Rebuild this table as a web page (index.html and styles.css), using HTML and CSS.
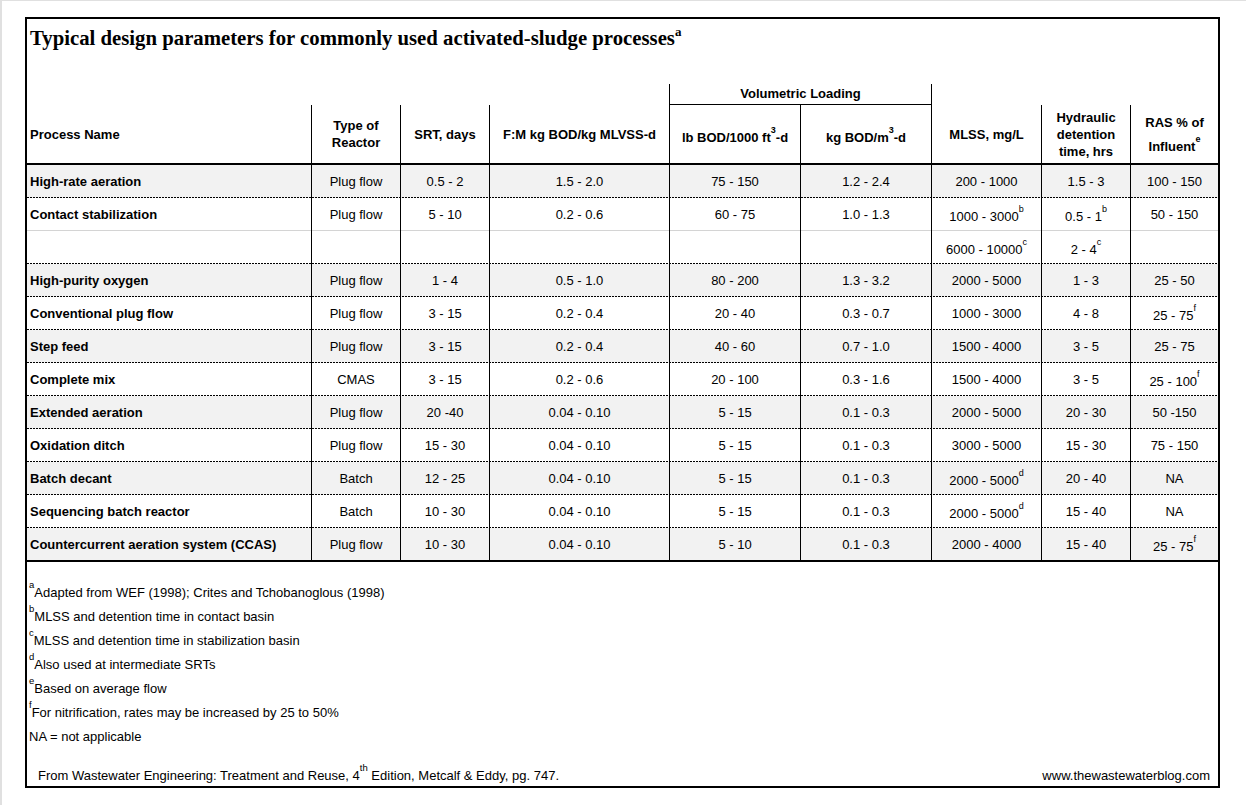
FILE: index.html
```html
<!DOCTYPE html>
<html lang="en">
<head>
<meta charset="utf-8">
<title>Typical design parameters for activated-sludge processes</title>
<link rel="stylesheet" href="styles.css">
</head>
<body>
<div class="page">
  <div class="sheet">
    <h1 class="title">Typical design parameters for commonly used activated-sludge processes<sup class="tsup">a</sup></h1>

    <div class="hrow1">
      <div class="hspacer"></div>
      <div class="hgroup">Volumetric Loading</div>
    </div>
    <div class="hrow2">
      <div class="hc left"><span>Process Name</span></div>
      <div class="hc"><span>Type of<br>Reactor</span></div>
      <div class="hc"><span>SRT, days</span></div>
      <div class="hc"><span>F:M kg BOD/kg MLVSS-d</span></div>
      <div class="hc"><span>lb BOD/1000 ft<sup class="s">3</sup>-d</span></div>
      <div class="hc"><span>kg BOD/m<sup class="s">3</sup>-d</span></div>
      <div class="hc"><span>MLSS, mg/L</span></div>
      <div class="hc"><span>Hydraulic<br>detention<br>time, hrs</span></div>
      <div class="hc"><span>RAS % of<br>Influent<sup class="s">e</sup></span></div>
    </div>

    <div class="row shade">
      <div class="c name"><span>High-rate aeration</span></div><div class="c"><span>Plug flow</span></div><div class="c"><span>0.5 - 2</span></div><div class="c"><span>1.5 - 2.0</span></div><div class="c"><span>75 - 150</span></div><div class="c"><span>1.2 - 2.4</span></div><div class="c"><span>200 - 1000</span></div><div class="c"><span>1.5 - 3</span></div><div class="c"><span>100 - 150</span></div>
    </div>
    <div class="row solid">
      <div class="c name"><span>Contact stabilization</span></div><div class="c"><span>Plug flow</span></div><div class="c"><span>5 - 10</span></div><div class="c"><span>0.2 - 0.6</span></div><div class="c"><span>60 - 75</span></div><div class="c"><span>1.0 - 1.3</span></div><div class="c"><span>1000 - 3000<sup class="s">b</sup></span></div><div class="c"><span>0.5 - 1<sup class="s">b</sup></span></div><div class="c"><span>50 - 150</span></div>
    </div>
    <div class="row">
      <div class="c name"></div><div class="c"></div><div class="c"></div><div class="c"></div><div class="c"></div><div class="c"></div><div class="c"><span>6000 - 10000<sup class="s">c</sup></span></div><div class="c"><span>2 - 4<sup class="s">c</sup></span></div><div class="c"></div>
    </div>
    <div class="row shade">
      <div class="c name"><span>High-purity oxygen</span></div><div class="c"><span>Plug flow</span></div><div class="c"><span>1 - 4</span></div><div class="c"><span>0.5 - 1.0</span></div><div class="c"><span>80 - 200</span></div><div class="c"><span>1.3 - 3.2</span></div><div class="c"><span>2000 - 5000</span></div><div class="c"><span>1 - 3</span></div><div class="c"><span>25 - 50</span></div>
    </div>
    <div class="row">
      <div class="c name"><span>Conventional plug flow</span></div><div class="c"><span>Plug flow</span></div><div class="c"><span>3 - 15</span></div><div class="c"><span>0.2 - 0.4</span></div><div class="c"><span>20 - 40</span></div><div class="c"><span>0.3 - 0.7</span></div><div class="c"><span>1000 - 3000</span></div><div class="c"><span>4 - 8</span></div><div class="c"><span>25 - 75<sup class="s">f</sup></span></div>
    </div>
    <div class="row shade">
      <div class="c name"><span>Step feed</span></div><div class="c"><span>Plug flow</span></div><div class="c"><span>3 - 15</span></div><div class="c"><span>0.2 - 0.4</span></div><div class="c"><span>40 - 60</span></div><div class="c"><span>0.7 - 1.0</span></div><div class="c"><span>1500 - 4000</span></div><div class="c"><span>3 - 5</span></div><div class="c"><span>25 - 75</span></div>
    </div>
    <div class="row">
      <div class="c name"><span>Complete mix</span></div><div class="c"><span>CMAS</span></div><div class="c"><span>3 - 15</span></div><div class="c"><span>0.2 - 0.6</span></div><div class="c"><span>20 - 100</span></div><div class="c"><span>0.3 - 1.6</span></div><div class="c"><span>1500 - 4000</span></div><div class="c"><span>3 - 5</span></div><div class="c"><span>25 - 100<sup class="s">f</sup></span></div>
    </div>
    <div class="row shade">
      <div class="c name"><span>Extended aeration</span></div><div class="c"><span>Plug flow</span></div><div class="c"><span>20 -40</span></div><div class="c"><span>0.04 - 0.10</span></div><div class="c"><span>5 - 15</span></div><div class="c"><span>0.1 - 0.3</span></div><div class="c"><span>2000 - 5000</span></div><div class="c"><span>20 - 30</span></div><div class="c"><span>50 -150</span></div>
    </div>
    <div class="row">
      <div class="c name"><span>Oxidation ditch</span></div><div class="c"><span>Plug flow</span></div><div class="c"><span>15 - 30</span></div><div class="c"><span>0.04 - 0.10</span></div><div class="c"><span>5 - 15</span></div><div class="c"><span>0.1 - 0.3</span></div><div class="c"><span>3000 - 5000</span></div><div class="c"><span>15 - 30</span></div><div class="c"><span>75 - 150</span></div>
    </div>
    <div class="row shade">
      <div class="c name"><span>Batch decant</span></div><div class="c"><span>Batch</span></div><div class="c"><span>12 - 25</span></div><div class="c"><span>0.04 - 0.10</span></div><div class="c"><span>5 - 15</span></div><div class="c"><span>0.1 - 0.3</span></div><div class="c"><span>2000 - 5000<sup class="s">d</sup></span></div><div class="c"><span>20 - 40</span></div><div class="c"><span>NA</span></div>
    </div>
    <div class="row">
      <div class="c name"><span>Sequencing batch reactor</span></div><div class="c"><span>Batch</span></div><div class="c"><span>10 - 30</span></div><div class="c"><span>0.04 - 0.10</span></div><div class="c"><span>5 - 15</span></div><div class="c"><span>0.1 - 0.3</span></div><div class="c"><span>2000 - 5000<sup class="s">d</sup></span></div><div class="c"><span>15 - 40</span></div><div class="c"><span>NA</span></div>
    </div>
    <div class="row shade last">
      <div class="c name"><span>Countercurrent aeration system (CCAS)</span></div><div class="c"><span>Plug flow</span></div><div class="c"><span>10 - 30</span></div><div class="c"><span>0.04 - 0.10</span></div><div class="c"><span>5 - 10</span></div><div class="c"><span>0.1 - 0.3</span></div><div class="c"><span>2000 - 4000</span></div><div class="c"><span>15 - 40</span></div><div class="c"><span>25 - 75<sup class="s">f</sup></span></div>
    </div>

    <div class="notes">
      <p><sup class="fs">a</sup>Adapted from WEF (1998); Crites and Tchobanoglous (1998)</p>
      <p><sup class="fs">b</sup>MLSS and detention time in contact basin</p>
      <p><sup class="fs">c</sup>MLSS and detention time in stabilization basin</p>
      <p><sup class="fs">d</sup>Also used at intermediate SRTs</p>
      <p><sup class="fs">e</sup>Based on average flow</p>
      <p><sup class="fs">f</sup>For nitrification, rates may be increased by 25 to 50%</p>
      <p>NA = not applicable</p>
    </div>
    <div class="source">
      <span>From Wastewater Engineering: Treatment and Reuse, 4<sup class="fs">th</sup> Edition, Metcalf &amp; Eddy, pg. 747.</span>
      <span>www.thewastewaterblog.com</span>
    </div>
  </div>
</div>
</body>
</html>
```

FILE: styles.css
```css
* {
  box-sizing: border-box;
  margin: 0;
  padding: 0;
}

:root {
  --cols: 285px 89px 89px 180px 131px 131px 110px 89px 87px;
}

html, body {
  background: #fff;
}

body {
  font-family: "Liberation Sans", Arial, sans-serif;
  font-size: 13px;
  color: #000;
}

.page {
  height: 805px;
  border-top: 1px solid #e0e0e0;
  border-left: 2px solid #e0e0e0;
  padding: 16px 0 0 23px;
}

.sheet {
  width: 1195px;
  height: 771px;
  border: 2px solid #000;
  display: flex;
  flex-direction: column;
}

.title {
  height: 65px;
  flex: none;
  padding: 7px 0 0 3px;
  font-family: "Liberation Serif", "Times New Roman", serif;
  font-weight: bold;
  font-size: 20.75px;
  line-height: 24px;
}

.tsup {
  font-size: 13px;
  vertical-align: 9px;
  line-height: 0;
}

.hrow1 {
  display: grid;
  grid-template-columns: var(--cols);
  height: 21px;
  flex: none;
}

.hspacer {
  grid-column: 1 / 5;
  border-right: 1px solid #000;
}

.hgroup {
  grid-column: 5 / 7;
  border-right: 1px solid #000;
  border-bottom: 1px solid #000;
  font-weight: bold;
  text-align: center;
  line-height: 20px;
}

.hrow2 {
  display: grid;
  grid-template-columns: var(--cols);
  height: 60px;
  flex: none;
  border-bottom: 2px solid #000;
}

.hc {
  border-right: 1px solid #000;
  display: flex;
  align-items: center;
  justify-content: center;
  text-align: center;
  font-weight: bold;
  line-height: 17px;
  white-space: nowrap;
}

.hc:last-child {
  border-right: 0;
}

.hc.left {
  justify-content: flex-start;
  text-align: left;
  padding-left: 3px;
}

.s {
  font-size: 9px;
  vertical-align: 9px;
}

.row {
  display: grid;
  grid-template-columns: var(--cols);
  height: 33px;
  flex: none;
  background-color: #fff;
  background-image: repeating-linear-gradient(to right, #000 0 2px, transparent 2px 3px);
  background-size: 100% 1px;
  background-position: left bottom;
  background-repeat: no-repeat;
}

.row.shade {
  background-color: #f2f2f2;
}

.row.solid {
  background-image: linear-gradient(#d4d4d4, #d4d4d4);
}

.row.last {
  height: 34px;
  background-image: none;
  border-bottom: 2px solid #000;
}

.c {
  border-right: 1px solid #000;
  padding-bottom: 1px;
  display: flex;
  align-items: center;
  justify-content: center;
  white-space: nowrap;
}

.row.last .c {
  padding-bottom: 0;
}

.c:last-child {
  border-right: 0;
}

.c.name {
  justify-content: flex-start;
  padding-left: 3px;
  font-weight: bold;
}

.notes {
  flex: none;
  padding: 19px 0 0 2px;
}

.notes p {
  height: 24px;
  line-height: 24px;
}

.fs {
  font-size: 9.5px;
  vertical-align: 9px;
  line-height: 0;
}

.source {
  flex: 1;
  display: flex;
  justify-content: space-between;
  align-items: flex-end;
  padding: 0 8px 2px 11px;
  line-height: 16px;
}
```
